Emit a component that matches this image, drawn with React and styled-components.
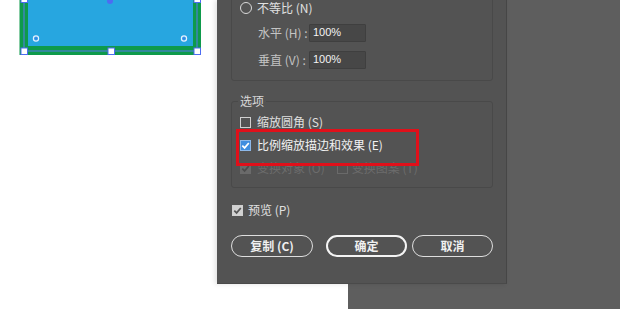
import React from "react";
import styled, { createGlobalStyle } from "styled-components";

const Global = createGlobalStyle`
  html, body { margin: 0; padding: 0; background: #ffffff; }
  body { font-family: "Noto Sans CJK SC", "Liberation Sans", sans-serif; }
  * { box-sizing: border-box; }
`;

const Workspace = styled.div`
  position: relative;
  width: 620px;
  height: 309px;
  overflow: hidden;
  display: flex;
`;

const Artboard = styled.div`
  width: 348px;
  height: 100%;
  background: #ffffff;
`;

const Pasteboard = styled.div`
  flex: 1;
  height: 100%;
  background: #5e5e5e;
`;

const Dialog = styled.div`
  position: absolute;
  left: 217px;
  top: 0;
  width: 290px;
  height: 284px;
  background: #535353;
  border-right: 1px solid #464646;
  border-bottom: 1px solid #4a4a4a;
  box-shadow: -2px 0 5px rgba(0, 0, 0, 0.12);
  padding: 0 13px 0 14px;
  display: flex;
  flex-direction: column;
  color: #e2e2e2;
  font-size: 12px;
  line-height: 14px;
`;

const Group = styled.div`
  position: relative;
  border: 1px solid #494949;
  border-radius: 3px;
  padding: ${(p) => p.$pad};
  margin-top: ${(p) => p.$mt};
  height: ${(p) => p.$h};
  display: flex;
  flex-direction: column;
`;

const Legend = styled.div`
  margin: -8px 0 0 -2px;
  padding: 0 2px;
  align-self: flex-start;
  background: #535353;
  color: #d8d8d8;
  height: 14px;
  line-height: 14px;
`;

const Row = styled.div`
  display: flex;
  align-items: center;
  height: 14px;
  margin-top: ${(p) => p.$mt || "0"};
  margin-left: ${(p) => p.$ml || "0"};
  color: ${(p) => (p.$disabled ? "#6c6c6c" : p.$bright ? "#f2f2f2" : "#e0e0e0")};
  white-space: nowrap;
`;

const Radio = styled.span`
  width: 12px;
  height: 12px;
  border: 1px solid #d9d9d9;
  border-radius: 50%;
  margin-right: 5px;
  flex: none;
`;

const Box = styled.span`
  width: 11px;
  height: 11px;
  flex: none;
  margin-right: ${(p) => p.$mr || "6px"};
  border: 1px solid
    ${(p) =>
      p.$disabled ? "#6a6a6a" : p.$tone === "blue" ? "#8db8e8" : "#cfcfcf"};
  background: ${(p) =>
    !p.$checked
      ? "transparent"
      : p.$disabled
      ? "#6a6a6a"
      : p.$tone === "blue"
      ? "#3f8ddf"
      : "#d2d2d2"};
  display: flex;
  align-items: center;
  justify-content: center;
  svg {
    display: block;
  }
`;

const Check = ({ color }) => (
  <svg width="9" height="9" viewBox="0 0 9 9">
    <path d="M1.3 4.6 L3.6 6.9 L7.8 2" fill="none" stroke={color} strokeWidth="1.7" />
  </svg>
);

const CheckBox = ({ checked, tone, disabled, mr }) => (
  <Box $checked={checked} $tone={tone} $disabled={disabled} $mr={mr}>
    {checked && (
      <Check color={disabled ? "#4c4c4c" : tone === "blue" ? "#ffffff" : "#555555"} />
    )}
  </Box>
);

const FieldRow = styled.div`
  display: flex;
  align-items: center;
  height: 18px;
  margin-top: 9px;
  padding-left: 18px;
`;

const FieldLabel = styled.span`
  width: 51px;
  color: #c4c4c4;
  white-space: nowrap;
`;

const Input = styled.div`
  width: 57px;
  height: 18px;
  background: #474747;
  border: 1px solid #3f3f3f;
  border-radius: 1px;
  color: #f4f4f4;
  font-family: "Liberation Sans", sans-serif;
  font-size: 11px;
  line-height: 15px;
  padding-left: 3px;
`;

const Spacer = styled.span`
  width: ${(p) => p.$w};
  flex: none;
`;

const Highlight = styled.div`
  position: absolute;
  left: 4px;
  top: 27px;
  width: 183px;
  height: 37px;
  border: 3px solid #e0101a;
  pointer-events: none;
`;

const Buttons = styled.div`
  display: flex;
  margin-top: 18px;
`;

const Button = styled.div`
  width: ${(p) => p.$w};
  height: 22px;
  margin-left: ${(p) => p.$ml || "0"};
  border-radius: 11px;
  border: ${(p) => (p.$primary ? "2px solid #f4f4f4" : "1px solid #dedede")};
  display: flex;
  align-items: center;
  justify-content: center;
  color: #f0f0f0;
  font-weight: 700;
  font-size: 12px;
`;

const Shape = () => (
  <svg width="220" height="60" viewBox="0 0 220 60" style={{ display: "block" }}>
    <rect x="19.5" y="-10" width="181.5" height="65" fill="#0e9a4b" />
    <rect x="28" y="-10" width="165" height="56" fill="#27a6e0" />
    <path d="M24 -2 V51 H197 V-2" fill="none" stroke="#5878f0" strokeWidth="1" />
    <circle cx="110" cy="1" r="3" fill="#4d6cf2" />
    {[
      [24, 51],
      [111, 51],
      [197, 51],
      [24, -1],
      [197, -1],
    ].map(([x, y], i) => (
      <rect key={i} x={x - 3} y={y - 3} width="6.5" height="6.5" fill="#ffffff" stroke="#4d6cf2" strokeWidth="1" />
    ))}
    {[36, 184].map((x) => (
      <g key={x}>
        <circle cx={x} cy="38.5" r="2.6" fill="none" stroke="#e8eeff" strokeWidth="1.2" />
        <circle cx={x} cy="38.5" r="0.9" fill="#4d6cf2" />
      </g>
    ))}
  </svg>
);

export default function App() {
  return (
    <>
      <Global />
      <Workspace>
        <Artboard>
          <Shape />
        </Artboard>
        <Pasteboard />
        <Dialog>
          <Group $mt="-20px" $h="101px" $pad="20px 0 0 8px">
            <Row>
              <Radio />
              <span>不等比 (N)</span>
            </Row>
            <FieldRow>
              <FieldLabel>水平 (H) :</FieldLabel>
              <Input>100%</Input>
            </FieldRow>
            <FieldRow>
              <FieldLabel>垂直 (V) :</FieldLabel>
              <Input>100%</Input>
            </FieldRow>
          </Group>

          <Group $mt="20px" $h="87px" $pad="0 0 0 8px">
            <Legend>选项</Legend>
            <Row $mt="7px">
              <CheckBox />
              <span>缩放圆角 (S)</span>
            </Row>
            <Row $mt="9px" $bright>
              <CheckBox checked tone="blue" />
              <span>比例缩放描边和效果 (E)</span>
            </Row>
            <Row $mt="9px" $disabled>
              <CheckBox checked disabled />
              <span>变换对象 (O)</span>
              <Spacer $w="12px" />
              <CheckBox disabled mr="4px" />
              <span>变换图案 (T)</span>
            </Row>
            <Highlight />
          </Group>

          <Row $mt="15px" $ml="1px">
            <CheckBox checked tone="gray" mr="5px" />
            <span>预览 (P)</span>
          </Row>

          <Buttons>
            <Button $w="82px">复制 (C)</Button>
            <Button $w="81px" $ml="13px" $primary>
              确定
            </Button>
            <Button $w="81px" $ml="5px">
              取消
            </Button>
          </Buttons>
        </Dialog>
      </Workspace>
    </>
  );
}
